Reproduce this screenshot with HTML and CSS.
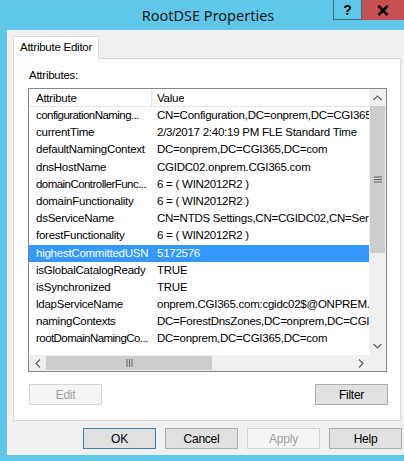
FILE: index.html
```html
<!DOCTYPE html>
<html>
<head>
<meta charset="utf-8">
<link rel="stylesheet" href="styles.css">
</head>
<body>
<div class="window">
  <div class="titlebar">
    <div class="title">RootDSE Properties</div>
    <div class="caption-btns">
      <div class="cbtn help">?</div>
      <div class="cbtn close">
        <svg width="12" height="11" viewBox="0 0 12 11"><path d="M1.5 1 L10.5 10 M10.5 1 L1.5 10" stroke="#000" stroke-width="2.6" stroke-linecap="butt"/></svg>
      </div>
    </div>
  </div>
  <div class="client">
    <div class="tabs"><div class="tab">Attribute Editor</div></div>
    <div class="panel">
      <div class="label">Attributes:</div>
      <div class="listbox">
        <div class="content">
          <div class="row header"><div class="c1">Attribute</div><div class="c2">Value</div></div>
          <div class="row"><div class="c1 trunc">configurationNaming...</div><div class="c2">CN=Configuration,DC=onprem,DC=CGI365,DC=com</div></div>
          <div class="row"><div class="c1">currentTime</div><div class="c2">2/3/2017 2:40:19 PM FLE Standard Time</div></div>
          <div class="row"><div class="c1">defaultNamingContext</div><div class="c2">DC=onprem,DC=CGI365,DC=com</div></div>
          <div class="row"><div class="c1">dnsHostName</div><div class="c2">CGIDC02.onprem.CGI365.com</div></div>
          <div class="row"><div class="c1 trunc">domainControllerFunc...</div><div class="c2">6 = ( WIN2012R2 )</div></div>
          <div class="row"><div class="c1">domainFunctionality</div><div class="c2">6 = ( WIN2012R2 )</div></div>
          <div class="row"><div class="c1">dsServiceName</div><div class="c2">CN=NTDS Settings,CN=CGIDC02,CN=Servers,CN=Default-First-Site</div></div>
          <div class="row"><div class="c1">forestFunctionality</div><div class="c2">6 = ( WIN2012R2 )</div></div>
          <div class="row selected"><div class="c1">highestCommittedUSN</div><div class="c2">5172576</div></div>
          <div class="row"><div class="c1">isGlobalCatalogReady</div><div class="c2">TRUE</div></div>
          <div class="row"><div class="c1">isSynchronized</div><div class="c2">TRUE</div></div>
          <div class="row"><div class="c1">ldapServiceName</div><div class="c2">onprem.CGI365.com:cgidc02$@ONPREM.CGI365.COM</div></div>
          <div class="row"><div class="c1">namingContexts</div><div class="c2">DC=ForestDnsZones,DC=onprem,DC=CGI365,DC=com</div></div>
          <div class="row"><div class="c1 trunc">rootDomainNamingCo...</div><div class="c2">DC=onprem,DC=CGI365,DC=com</div></div>
        </div>
        <div class="vscroll">
          <div class="arrow"><svg width="9" height="6" viewBox="0 0 9 6"><path d="M0.5 5 L4.5 1 L8.5 5" fill="none" stroke="#606060" stroke-width="1.2"/></svg></div>
          <div class="vtrack">
            <div class="vthumb"><svg width="8" height="7" viewBox="0 0 8 7"><path d="M0 1 H8 M0 3.5 H8 M0 6 H8" stroke="#606060" stroke-width="1"/></svg></div>
          </div>
          <div class="arrow"><svg width="9" height="6" viewBox="0 0 9 6"><path d="M0.5 1 L4.5 5 L8.5 1" fill="none" stroke="#606060" stroke-width="1.2"/></svg></div>
        </div>
        <div class="hscroll">
          <div class="harrow"><svg width="6" height="9" viewBox="0 0 6 9"><path d="M5 0.5 L1 4.5 L5 8.5" fill="none" stroke="#606060" stroke-width="1.2"/></svg></div>
          <div class="htrack">
            <div class="hthumb"><svg width="7" height="8" viewBox="0 0 7 8"><path d="M1 0 V8 M3.5 0 V8 M6 0 V8" stroke="#606060" stroke-width="1"/></svg></div>
          </div>
          <div class="harrow"><svg width="6" height="9" viewBox="0 0 6 9"><path d="M1 0.5 L5 4.5 L1 8.5" fill="none" stroke="#606060" stroke-width="1.2"/></svg></div>
        </div>
        <div class="corner"></div>
      </div>
      <div class="panel-btns">
        <div class="btn disabled">Edit</div>
        <div class="btn">Filter</div>
      </div>
    </div>
    <div class="dlg-btns">
      <div class="btn default">OK</div>
      <div class="btn">Cancel</div>
      <div class="btn disabled">Apply</div>
      <div class="btn">Help</div>
    </div>
  </div>
</div>
</body>
</html>
```

FILE: styles.css
```css
* { box-sizing: border-box; }
html, body {
  margin: 0;
  padding: 0;
}
body {
  width: 404px;
  height: 461px;
  overflow: hidden;
  background: #5fc7ea;
  font-family: "Liberation Sans", Arial, sans-serif;
  font-size: 11.5px;
  letter-spacing: -0.25px;
  color: #000;
}
.window {
  width: 404px;
  height: 461px;
  display: flex;
  flex-direction: column;
}
.titlebar {
  height: 30px;
  position: relative;
  display: flex;
  align-items: center;
  justify-content: center;
  padding-left: 12px;
}
.title {
  font-family: "Noto Sans", sans-serif;
  font-size: 14.5px;
  letter-spacing: 0;
  color: #1b1b1b;
  margin-top: -1px;
}
.caption-btns {
  position: absolute;
  top: 0;
  right: 0;
  display: flex;
}
.cbtn {
  height: 20px;
  display: flex;
  align-items: center;
  justify-content: center;
}
.help {
  width: 29px;
  border: 1px solid #3f6c80;
  border-top: none;
  font-weight: bold;
  font-size: 14px;
  letter-spacing: 0;
}
.close {
  width: 42px;
  background: #c75050;
}
.client {
  margin-left: 7px;
  width: 397px;
  height: 425px;
  background: #f0f0f0;
  padding: 6px 0 0 6px;
  display: flex;
  flex-direction: column;
}
.tabs {
  display: flex;
  height: 22px;
  position: relative;
  z-index: 1;
}
.tab {
  width: 86px;
  height: 23px;
  background: #fff;
  border: 1px solid #d9d9d9;
  border-bottom: none;
  padding: 4px 0 0 6px;
  white-space: nowrap;
}
.panel {
  width: 388px;
  height: 363px;
  background: #fff;
  border: 1px solid #d9d9d9;
  padding: 10px 0 0 14px;
  display: flex;
  flex-direction: column;
}
.label {
  height: 19px;
  padding-left: 1px;
}
.listbox {
  width: 359px;
  height: 284px;
  border: 1px solid #828790;
  display: grid;
  grid-template-columns: 340px 17px;
  grid-template-rows: 265px 17px;
}
.content {
  overflow: hidden;
}
.row {
  display: flex;
  height: 17.2px;
  line-height: 17px;
  white-space: nowrap;
}
.row.header {
  height: 18px;
  line-height: 18px;
  border-bottom: 1px solid #e5e5e5;
}
.row.header .c1 { border-right: 1px solid #e5e5e5; }
.c1 {
  width: 123px;
  flex: none;
  padding-left: 7px;
  overflow: hidden;
}
.c1.trunc {
  letter-spacing: -0.55px;
}
.c2 {
  padding-left: 5px;
  overflow: hidden;
}
.row.selected {
  background: #3399ff;
  color: #fff;
}
.vscroll {
  background: #f0f0f0;
  display: flex;
  flex-direction: column;
}
.arrow {
  height: 17px;
  display: flex;
  align-items: center;
  justify-content: center;
}
.vtrack {
  flex: 1;
}
.vthumb {
  margin: 0 1px;
  height: 147px;
  background: #cdcdcd;
  display: flex;
  align-items: center;
  justify-content: center;
}
.hscroll {
  background: #f0f0f0;
  display: flex;
  border-top: 1px solid #fff;
}
.harrow {
  width: 17px;
  display: flex;
  align-items: center;
  justify-content: center;
}
.htrack {
  flex: 1;
  display: flex;
  padding: 1px 0;
}
.hthumb {
  width: 166px;
  background: #cdcdcd;
  display: flex;
  align-items: center;
  justify-content: center;
}
.corner {
  background: #f0f0f0;
}
.panel-btns {
  display: flex;
  justify-content: space-between;
  width: 360px;
  margin-top: 12px;
  padding-left: 1px;
}
.btn {
  width: 73px;
  height: 21px;
  background: #e1e1e1;
  border: 1px solid #adadad;
  display: flex;
  align-items: center;
  justify-content: center;
  font-size: 12px;
}
.btn.disabled {
  background: #f4f4f4;
  border-color: #d5d5d5;
  color: #a0a0a0;
}
.btn.default {
  border-color: #3c7fb1;
}
.dlg-btns {
  display: flex;
  justify-content: flex-end;
  gap: 9px;
  margin-top: 7px;
  padding-right: 2px;
}
```
